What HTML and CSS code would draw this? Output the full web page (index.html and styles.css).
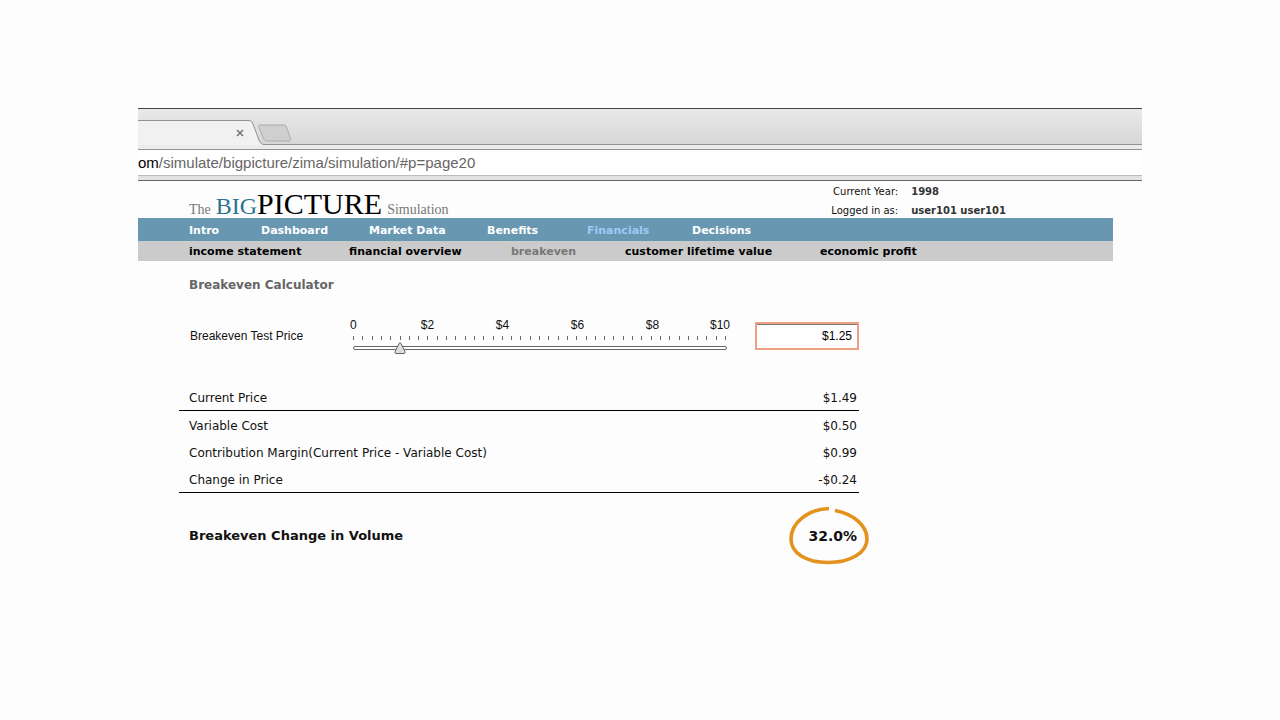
FILE: index.html
```html
<!DOCTYPE html>
<html lang="en">
<head>
    <meta charset="UTF-8">
    <meta name="viewport" content="width=device-width, initial-scale=1.0">
    <title>Breakeven - The BigPicture Simulation</title>
    <link rel="stylesheet" href="styles.css">
</head>
<body>
    <div class="browser">
        <div class="tab-strip">
            <div class="tab">
                <button class="tab-close" type="button" aria-label="Close tab">
                    <svg width="8" height="8" viewBox="0 0 8 8" stroke="#777" stroke-width="1.6"><path d="M1 1l6 6M7 1L1 7"></path></svg>
                </button>
            </div>
            <svg class="tab-edge" width="46" height="25" viewBox="0 0 46 25" fill="none">
                <path d="M0 .5C3 .5 4 1 5 4l6 16c1 3 3 4.500 5 4.500V25H0z" fill="#f1f1f1"></path>
                <path d="M0 .5C3 .5 4 1 5 4l6 16c1 3 3 4.500 5 4.500H46" stroke="#929292"></path>
                <path d="M12 5H35c2 0 3 .5 3.500 2l4 11.500c.5 1.500 0 2.500-1.500 2.500H19c-2 0-3-1-3.500-2.500L11 7.500C10.500 6 10.500 5 12 5z" fill="#cfcfcf" stroke="#ababab"></path>
            </svg>
        </div>
        <div class="address-bar">
            <div class="url"><span class="host">om</span>/simulate/bigpicture/zima/simulation/#p=page20</div>
        </div>

        <header class="header">
            <h1 class="logo">
                <span>The</span>
                <span><span class="logo-big">BIG</span><span class="logo-picture">PICTURE</span></span>
                <span>Simulation</span>
            </h1>
            <dl class="session">
                <dt>Current Year:</dt>
                <dd>1998</dd>
                <dt>Logged in as:</dt>
                <dd>user101 user101</dd>
            </dl>
        </header>

        <nav class="nav">
            <a href="#intro">Intro</a>
            <a href="#dashboard">Dashboard</a>
            <a href="#market">Market Data</a>
            <a href="#benefits">Benefits</a>
            <a href="#financials" class="active">Financials</a>
            <a href="#decisions">Decisions</a>
        </nav>
        <nav class="subnav">
            <a href="#income">income statement</a>
            <a href="#overview">financial overview</a>
            <a href="#breakeven" class="active">breakeven</a>
            <a href="#clv">customer lifetime value</a>
            <a href="#profit">economic profit</a>
        </nav>

        <main class="content">
            <h2>Breakeven Calculator</h2>

            <div class="price-row">
                <label for="price-slider">Breakeven Test Price</label>
                <div class="slider">
                    <div class="scale">
                        <span>0</span><span>$2</span><span>$4</span><span>$6</span><span>$8</span><span>$10</span>
                    </div>
                    <svg class="ticks" viewBox="0 0 374 4" preserveAspectRatio="none" shape-rendering="crispEdges">
                        <line x1="0" y1="2" x2="374" y2="2" stroke="#666" stroke-width="4" stroke-dasharray="1 8.3"></line>
                    </svg>
                    <div class="rail"></div>
                    <input type="range" id="price-slider" min="0" max="10" step="0.25" value="1.25">
                </div>
                <input type="text" class="price-input" id="price" value="$1.25" aria-label="Test price">
            </div>

            <table class="results">
                <tr class="ruled">
                    <th scope="row">Current Price</th>
                    <td>$1.49</td>
                </tr>
                <tr>
                    <th scope="row">Variable Cost</th>
                    <td>$0.50</td>
                </tr>
                <tr>
                    <th scope="row">Contribution Margin(Current Price - Variable Cost)</th>
                    <td>$0.99</td>
                </tr>
                <tr class="ruled">
                    <th scope="row">Change in Price</th>
                    <td>-$0.24</td>
                </tr>
                <tr class="total">
                    <th scope="row">Breakeven Change in Volume</th>
                    <td>
                        <span class="volume">32.0%
                            <svg class="circle" width="82" height="60" viewBox="0 0 82 60" fill="none" stroke="#e3921d" stroke-width="3.600">
                                <path d="M41 3.500C20 4 3 18 3 34c0 14 15 23.500 37 23.500S79 48 79 34C79 20 65 9 47 5.500"></path>
                            </svg>
                        </span>
                    </td>
                </tr>
            </table>
        </main>
    </div>

    <script>
        // Keep the slider and the price box in step
        const slider = document.getElementById('price-slider');
        const price = document.getElementById('price');

        slider.addEventListener('input', () => {
            price.value = '$' + Number(slider.value).toFixed(2);
        });
        price.addEventListener('change', () => {
            slider.value = price.value.replace('$', '');
        });
    </script>
</body>
</html>
```

FILE: styles.css
```css
* {
    box-sizing: border-box;
}
body {
    margin: 0;
    padding: 108px 138px;
    background-color: #fdfdfd;
    color: #111;
    font-family: Verdana, "DejaVu Sans", sans-serif;
    font-size: 12px;
}
a {
    text-decoration: none;
}

/* Browser chrome */
.tab-strip {
    display: flex;
    align-items: flex-end;
    height: 37px;
    border-top: 1px solid #444;
    background: linear-gradient(#e9e9e9, #d6d6d6);
    box-shadow: inset 0 -1px #929292;
}
.tab {
    display: flex;
    align-items: center;
    justify-content: flex-end;
    width: 110px;
    height: 25px;
    padding-right: 4px;
    border-top: 1px solid #929292;
    background-color: #f1f1f1;
}
.tab-close {
    display: flex;
    padding: 0;
    border: 0;
    background: none;
}
.address-bar {
    padding: 5px 0;
    border-bottom: 1px solid #666;
    background: linear-gradient(#ebebeb 4px, #929292 4px, #929292 5px, #fff 5px, #fff 30px, #bbb 30px, #bbb 31px, #e2e2e2 31px);
}
.url {
    height: 25px;
    color: #666;
    font-family: Arial, "Liberation Sans", sans-serif;
    font-size: 15px;
    line-height: 26px;
    white-space: nowrap;
}
.host {
    color: #000;
}

/* Site header */
.header {
    display: flex;
    justify-content: space-between;
    height: 37px;
    padding: 1px 136px 0 51px;
}
.logo {
    display: flex;
    align-items: baseline;
    gap: 5px;
    margin: 0;
    color: #777;
    font-family: "Liberation Serif", serif;
    font-size: 14px;
    font-weight: normal;
    line-height: 44px;
}
.logo-big {
    color: #2b7391;
    font-size: 24px;
}
.logo-picture {
    color: #000;
    font-size: 30px;
}
.session {
    display: grid;
    grid-template-columns: auto auto;
    column-gap: 13px;
    margin: 0;
    font-size: 10px;
    line-height: 19px;
}
.session dt {
    text-align: right;
}
.session dd {
    margin: 0;
    color: #333;
    font-weight: bold;
}

/* Menus */
.nav,
.subnav {
    display: grid;
    margin-right: 29px;
    padding: 2px 0 0 51px;
    font-size: 11px;
    font-weight: bold;
    white-space: nowrap;
}
.nav {
    grid-template-columns: 72px 108px 118px 100px 105px auto;
    background-color: #6898b1;
    line-height: 21px;
}
.nav a {
    color: #fff;
}
.nav .active {
    color: #9ccaf5;
}
.subnav {
    grid-template-columns: 160px 162px 114px 195px auto;
    background-color: #cbcbcb;
    line-height: 18px;
}
.subnav a {
    color: #000;
}
.subnav .active {
    color: #777;
}

/* Calculator */
.content {
    max-width: 680px;
    margin-left: 41px;
}
h2 {
    margin: 0;
    padding: 14px 10px 0;
    color: #666;
    font-size: 12px;
    line-height: 20px;
}
.price-row {
    display: flex;
    align-items: center;
    height: 82px;
    padding-left: 11px;
    font-family: Arial, "Liberation Sans", sans-serif;
}
.price-row label {
    width: 160px;
}
.slider {
    flex: 1;
    margin-right: 25px;
}
.scale {
    display: grid;
    grid-template-columns: 8fr repeat(4, 15fr) 8fr;
    line-height: 14px;
    text-align: center;
}
.scale span:first-child {
    text-align: left;
}
.scale span:last-child {
    text-align: right;
}
.ticks {
    display: block;
    width: calc(100% - 6px);
    height: 4px;
    margin: 4px 3px 6px;
}
.rail {
    height: 4px;
    margin: 0 3px;
    border: 1px solid #666;
    border-radius: 2px;
    background-color: #fff;
}
/* The thumb's centre travels the length of the rail */
.slider input {
    display: block;
    width: calc(100% + 6px);
    height: 12px;
    margin: -8px -3px 0;
    appearance: none;
    background: none;
}
.slider input::-webkit-slider-thumb {
    width: 12px;
    height: 12px;
    appearance: none;
    background: url("data:image/svg+xml,%3Csvg xmlns='http://www.w3.org/2000/svg' viewBox='0 0 12 12'%3E%3Cpath d='M5 1.500Q6 0 7 1.500L11 9.500Q11.500 11.500 10 11.500H2Q.5 11.500 1 9.500z' fill='%23ddd' stroke='%23666'/%3E%3C/svg%3E");
}
.price-input {
    width: 104px;
    height: 28px;
    padding: 0 5px;
    border: 2px solid #ee9f84;
    border-radius: 0;
    background-color: #fff;
    box-shadow: inset 0 1px #777;
    font-family: inherit;
    font-size: 12px;
    text-align: right;
}
.results {
    width: 100%;
    margin-top: 6px;
    border-collapse: collapse;
    line-height: 24px;
}
.results th,
.results td {
    padding: 3px 2px 0 10px;
    font-weight: normal;
    text-align: left;
}
.results td {
    text-align: right;
}
.results .ruled {
    border-bottom: 1px solid #000;
}
.results .total th,
.results .total td {
    height: 84px;
    font-size: 13px;
    font-weight: bold;
}
.results .total td {
    font-size: 14px;
}
.volume {
    position: relative;
}
.circle {
    position: absolute;
    top: -23px;
    right: -13px;
}
```
